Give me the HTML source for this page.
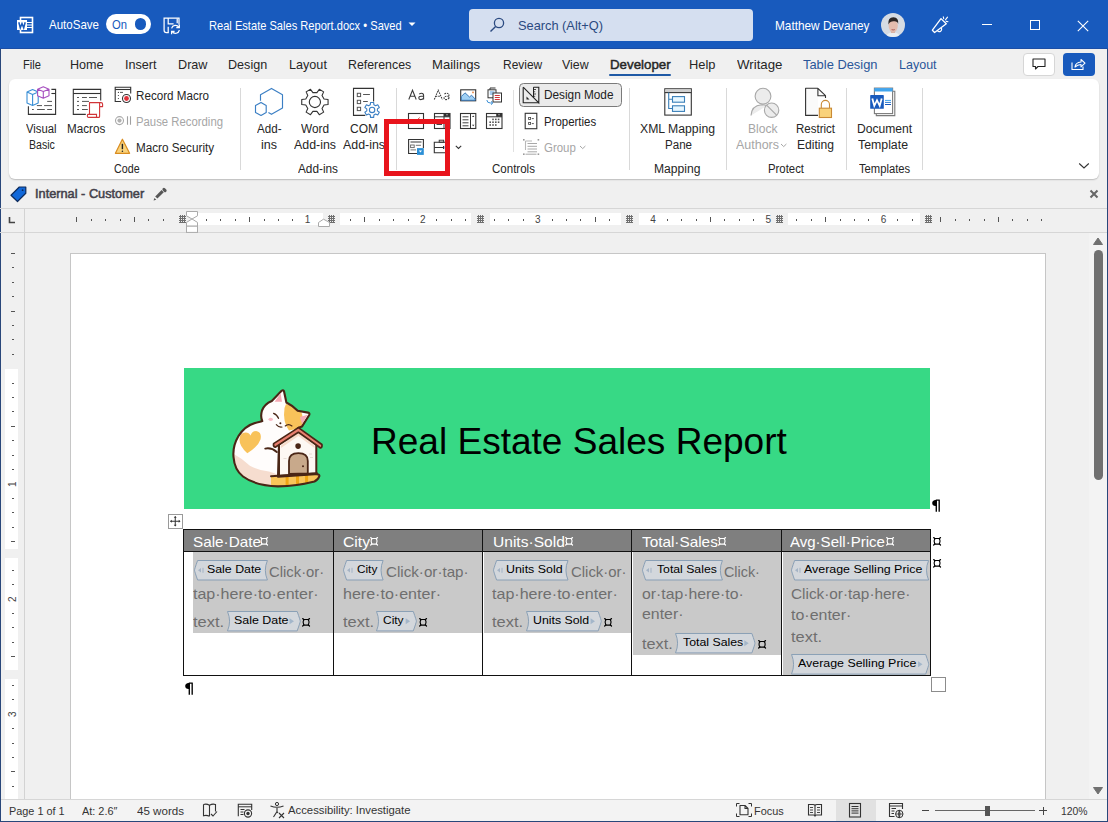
<!DOCTYPE html>
<html><head><meta charset="utf-8"><style>
html,body{margin:0;padding:0;width:1108px;height:822px;overflow:hidden;background:#f0f0f0;font-family:'Liberation Sans', sans-serif;}
.t{position:absolute;white-space:pre;line-height:1;transform-origin:0 0;}
.r{position:absolute;box-sizing:border-box;}
.s{position:absolute;overflow:visible;}
</style></head><body>
<div class="r" style="left:0px;top:0px;width:1108px;height:822px;background:#f0f0f0"></div>
<div class="r" style="left:0px;top:0px;width:1108px;height:49px;background:#185abd"></div>
<div class="r" style="left:0px;top:48px;width:1108px;height:1px;background:#1b4ea6"></div>
<div class="r" style="left:0px;top:49px;width:1px;height:773px;background:#29477a"></div>
<div class="r" style="left:1107px;top:49px;width:1px;height:773px;background:#29477a"></div>
<div class="r" style="left:0px;top:821px;width:1108px;height:1px;background:#29477a"></div>
<svg class="s" style="left:16px;top:16px;" width="18" height="18" viewBox="0 0 18 18">
<rect x="4.5" y="1.5" width="12" height="15" fill="none" stroke="#fff" stroke-width="1.6"></rect>
<rect x="1" y="4" width="10" height="10" fill="#fff"></rect>
<path d="M2.8 6.2 L4.3 11.8 L6 7.5 L7.7 11.8 L9.2 6.2" fill="none" stroke="#185abd" stroke-width="1.5"></path>
<path d="M11 6.5 H16 M11 9 H16 M11 11.5 H16" stroke="#fff" stroke-width="1.2"></path>
</svg>
<span class="t" style="left: 49px; top: 18.96px; font-size: 12.4px; color: rgb(255, 255, 255); font-weight: normal; transform: scaleX(0.9305); transform-origin: 0px 0px;">AutoSave</span>
<div class="r" style="left:106px;top:14px;width:45px;height:20px;background:#fff;border-radius:10px"></div>
<span class="t" style="left: 112.3px; top: 18.96px; font-size: 12.4px; color: rgb(24, 90, 189); font-weight: normal; transform: scaleX(0.9074); transform-origin: 0px 0px;">On</span>
<div class="r" style="left:134.5px;top:18.2px;width:11.6px;height:11.6px;background:#185abd;border-radius:50%"></div>
<svg class="s" style="left:162.7px;top:16.6px;" width="19" height="18" viewBox="0 0 19 18">
<g fill="none" stroke="#fff" stroke-width="1.25">
<path d="M16 7.6 V1 H1.1 V13.2 Q1.1 15.5 3.4 15.5 H5.8"></path>
<path d="M5.2 1 V6.8 H10.6"></path>
<path d="M14.2 1.5 V6.3"></path>
<path d="M5.2 9.8 V15.5"></path>
<path d="M8.6 11.3 A4 4 0 0 1 15.8 10.2"></path>
<path d="M16.4 13.2 A4 4 0 0 1 9.2 14.6"></path>
<path d="M16.3 7.6 V10.6 H13.3"></path>
<path d="M8.6 17.3 V14.3 H11.6"></path>
</g></svg>
<span class="t" style="left: 208.8px; top: 20.46px; font-size: 12.4px; color: rgb(255, 255, 255); font-weight: normal; transform: scaleX(0.8959); transform-origin: 0px 0px;">Real Estate Sales Report.docx • Saved</span>
<svg class="s" style="left:408px;top:22px;" width="8" height="5" viewBox="0 0 8 5"><path d="M0.5 0.5 L4 4 L7.5 0.5 Z" fill="#fff"></path></svg>
<div class="r" style="left:469px;top:9px;width:284px;height:32px;background:#d5dff0;border-radius:4px"></div>
<svg class="s" style="left:489px;top:17px;" width="16" height="16" viewBox="0 0 16 16"><circle cx="10" cy="6" r="4.6" fill="none" stroke="#2b4a80" stroke-width="1.3"></circle><path d="M6.6 9.4 L1.5 14.5" stroke="#2b4a80" stroke-width="1.4"></path></svg>
<span class="t" style="left: 518px; top: 19.96px; font-size: 12.4px; color: rgb(43, 74, 128); font-weight: normal; transform: scaleX(1.0328); transform-origin: 0px 0px;">Search (Alt+Q)</span>
<span class="t" style="left: 775px; top: 19.96px; font-size: 12.4px; color: rgb(255, 255, 255); font-weight: normal; transform: scaleX(0.9527); transform-origin: 0px 0px;">Matthew Devaney</span>
<svg class="s" style="left:881px;top:12.7px;" width="24" height="24" viewBox="0 0 24 24">
<defs><clipPath id="av"><circle cx="12" cy="12" r="12"></circle></clipPath></defs>
<circle cx="12" cy="12" r="12" fill="#d5dbe3"></circle>
<g clip-path="url(#av)">
<path d="M4 25 Q6 19.5 12 19 Q18 19.5 20 25 Z" fill="#e9eef2"></path>
<path d="M9.5 17 L10 20 L14 20 L14.5 17 Z" fill="#d9b3a5"></path>
<ellipse cx="12.2" cy="12.8" rx="4.6" ry="6.2" fill="#e3bcae"></ellipse>
<path d="M7.3 11.5 Q6.8 4.2 12.5 4.3 Q17.8 4.4 17.2 11 Q16.5 8 13 8.2 Q9.2 8 7.3 11.5 Z" fill="#2b2625"></path>
<path d="M10.6 16.6 Q12.2 17.3 13.8 16.6" stroke="#a5524d" stroke-width="0.9" fill="none"></path>
</g></svg>
<svg class="s" style="left:931px;top:16px;" width="18" height="18" viewBox="0 0 18 18">
<path d="M1.4 14.2 L10 2.6 L15.3 7.8 L3.6 16.5 Z" fill="none" stroke="#fff" stroke-width="1.3" stroke-linejoin="round"></path>
<path d="M6.4 14.6 A2.2 2.2 0 0 0 10.2 11.9" fill="none" stroke="#fff" stroke-width="1.2"></path>
<path d="M12.3 0.9 L12.7 2.7 M16.5 1.2 L14.4 3.9 M15.2 5.4 L17 5.7" stroke="#fff" stroke-width="1.1" stroke-linecap="round"></path>
</svg>
<div class="r" style="left:982px;top:24px;width:10px;height:1px;background:#fff"></div>
<div class="r" style="left:1030px;top:20px;width:10px;height:10px;border:1px solid #fff"></div>
<svg class="s" style="left:1077px;top:19.5px;" width="12" height="12" viewBox="0 0 12 12"><path d="M0.8 0.8 L11.2 11.2 M11.2 0.8 L0.8 11.2" stroke="#fff" stroke-width="1.1"></path></svg>
<span class="t" style="left: 23.3px; top: 59.03px; font-size: 12.9px; color: rgb(38, 38, 38); font-weight: normal; transform: scaleX(0.8614); transform-origin: 0px 0px;">File</span>
<span class="t" style="left: 69.5px; top: 59.03px; font-size: 12.9px; color: rgb(38, 38, 38); font-weight: normal; transform: scaleX(0.977); transform-origin: 0px 0px;">Home</span>
<span class="t" style="left: 125.1px; top: 59.03px; font-size: 12.9px; color: rgb(38, 38, 38); font-weight: normal; transform: scaleX(0.9798); transform-origin: 0px 0px;">Insert</span>
<span class="t" style="left: 178.2px; top: 59.03px; font-size: 12.9px; color: rgb(38, 38, 38); font-weight: normal; transform: scaleX(0.9803); transform-origin: 0px 0px;">Draw</span>
<span class="t" style="left: 228.2px; top: 59.03px; font-size: 12.9px; color: rgb(38, 38, 38); font-weight: normal; transform: scaleX(0.9766); transform-origin: 0px 0px;">Design</span>
<span class="t" style="left: 289px; top: 59.03px; font-size: 12.9px; color: rgb(38, 38, 38); font-weight: normal; transform: scaleX(0.9789); transform-origin: 0px 0px;">Layout</span>
<span class="t" style="left: 348.3px; top: 59.03px; font-size: 12.9px; color: rgb(38, 38, 38); font-weight: normal; transform: scaleX(0.9587); transform-origin: 0px 0px;">References</span>
<span class="t" style="left: 432.2px; top: 59.03px; font-size: 12.9px; color: rgb(38, 38, 38); font-weight: normal; transform: scaleX(1.017); transform-origin: 0px 0px;">Mailings</span>
<span class="t" style="left: 502.5px; top: 59.03px; font-size: 12.9px; color: rgb(38, 38, 38); font-weight: normal; transform: scaleX(0.9271); transform-origin: 0px 0px;">Review</span>
<span class="t" style="left: 562.2px; top: 59.03px; font-size: 12.9px; color: rgb(38, 38, 38); font-weight: normal; transform: scaleX(0.9596); transform-origin: 0px 0px;">View</span>
<span class="t" style="left: 689.1px; top: 59.03px; font-size: 12.9px; color: rgb(38, 38, 38); font-weight: normal; transform: scaleX(0.9994); transform-origin: 0px 0px;">Help</span>
<span class="t" style="left: 737.1px; top: 59.03px; font-size: 12.9px; color: rgb(38, 38, 38); font-weight: normal; transform: scaleX(1.0297); transform-origin: 0px 0px;">Writage</span>
<span class="t" style="left: 609.5px; top: 59.03px; font-size: 12.9px; color: rgb(38, 38, 38); font-weight: normal; -webkit-text-stroke: 0.45px rgb(38, 38, 38); transform: scaleX(1.0312); transform-origin: 0px 0px;">Developer</span>
<div class="r" style="left:609px;top:74px;width:62px;height:2px;background:#1f5aa6;border-radius:1px"></div>
<span class="t" style="left: 803.3px; top: 59.03px; font-size: 12.9px; color: rgb(42, 86, 153); font-weight: normal; transform: scaleX(0.9996); transform-origin: 0px 0px;">Table Design</span>
<span class="t" style="left: 899.2px; top: 59.03px; font-size: 12.9px; color: rgb(42, 86, 153); font-weight: normal; transform: scaleX(0.9711); transform-origin: 0px 0px;">Layout</span>
<div class="r" style="left:1023px;top:52.5px;width:32px;height:23px;background:#fff;border:1px solid #d6d6d6;border-radius:4px"></div>
<svg class="s" style="left:1032px;top:58px;" width="14" height="12" viewBox="0 0 14 12"><path d="M1 1 H13 V8.5 H6 L3.5 11 V8.5 H1 Z" fill="none" stroke="#222" stroke-width="1.1" stroke-linejoin="round"></path></svg>
<div class="r" style="left:1062.5px;top:52.5px;width:32px;height:23px;background:#185abd;border-radius:4px"></div>
<svg class="s" style="left:1071px;top:57px;" width="15" height="14" viewBox="0 0 15 14"><path d="M1 5.5 V12.5 H12 V9.5" fill="none" stroke="#fff" stroke-width="1.1"></path>
<path d="M4 10 Q4.5 5.5 10 5 V2.5 L14 6.2 L10 9.8 V7.5 Q6.5 7.6 4 10 Z" fill="none" stroke="#fff" stroke-width="1.1" stroke-linejoin="round"></path></svg>
<div class="r" style="left:9px;top:79px;width:1090px;height:100px;background:#fff;border-radius:6px;box-shadow:0 1px 1.5px rgba(0,0,0,0.22)"></div>
<svg class="s" style="left:22px;top:83px;" width="40" height="36" viewBox="0 0 40 36">
<path d="M29.4 6.4 H33.6 V31.4 H6.4 V23.2" fill="none" stroke="#333" stroke-width="1.1"></path>
<path d="M29.4 10.5 H33.6" stroke="#333" stroke-width="1.1"></path>
<path d="M25.2 18.4 H30 M14.9 22.6 H20 M22.1 22.6 H30 M10 26.5 H11.8 M15.1 26.5 H22.8 M25.2 26.5 H30" stroke="#555" stroke-width="1"></path>
<path d="M5 9 L10.6 6.6 L16.2 9 V20 L10.6 22.4 L5 20 Z M5 9 L10.6 11.4 L16.2 9 M10.6 11.4 V22.4" fill="#fff" stroke="#3a8fd6" stroke-width="1.1" stroke-linejoin="round"></path>
<path d="M15.6 6.2 L21.3 3.8 L27 6.2 V12.8 L21.3 15.2 L15.6 12.8 Z M15.6 6.2 L21.3 8.6 L27 6.2 M21.3 8.6 V15.2" fill="#fff" stroke="#a64fbf" stroke-width="1.1" stroke-linejoin="round"></path>
</svg>
<svg class="s" style="left:68px;top:83px;" width="40" height="36" viewBox="0 0 40 36">
<path d="M17.8 31.4 H5.3 V6.4 H32.7 V17.5" fill="none" stroke="#333" stroke-width="1.1"></path>
<path d="M5.3 10.5 H32.7" stroke="#333" stroke-width="1.1"></path>
<path d="M9 14.5 H11 M14 14.5 H18.9 M21 14.5 H29 M9 18.4 H11 M14 18.4 H21 M9 22.6 H11 M14 22.6 H18.9 M9 26.5 H11 M14 26.5 H19.8" stroke="#555" stroke-width="1"></path>
<path d="M21.5 19.6 H33 Q34.6 19.6 34.6 21.3 V23.6 H31.6 V33.4 Q31.6 34.4 30.6 34.4 H20.6 Q19.4 34.4 19.4 33.2 V32.3 Q19.4 31.4 20.4 31.4 H21.5 Z" fill="#fff" stroke="#d13438" stroke-width="1.1" stroke-linejoin="round"></path>
<path d="M21.5 31.4 H28.5 V34.4 M31.6 19.6 V23.6" fill="none" stroke="#d13438" stroke-width="1.1"></path>
</svg>
<span class="t" style="left: 26.1px; top: 122.95px; font-size: 12.3px; color: rgb(38, 38, 38); font-weight: normal; transform: scaleX(0.9164); transform-origin: 0px 0px;">Visual</span>
<span class="t" style="left: 28.6px; top: 138.84px; font-size: 12.3px; color: rgb(38, 38, 38); font-weight: normal; transform: scaleX(0.8611); transform-origin: 0px 0px;">Basic</span>
<span class="t" style="left: 67.4px; top: 122.95px; font-size: 12.3px; color: rgb(38, 38, 38); font-weight: normal; transform: scaleX(0.9497); transform-origin: 0px 0px;">Macros</span>
<svg class="s" style="left:112px;top:84px;" width="22" height="22" viewBox="0 0 22 22">
<path d="M9.1 17.5 H3.2 V3.2 H18.7 V9.6" fill="none" stroke="#333" stroke-width="1.1"></path>
<path d="M3.2 5.5 H18.7" stroke="#333" stroke-width="1.1"></path>
<circle cx="6.4" cy="8.4" r="0.6" fill="#444"></circle><circle cx="6.4" cy="11.5" r="0.6" fill="#444"></circle><circle cx="6.4" cy="14.5" r="0.6" fill="#444"></circle>
<path d="M8 8.4 H11" stroke="#444" stroke-width="0.9"></path>
<circle cx="14.5" cy="14.5" r="4" fill="#fff" stroke="#333" stroke-width="1.1"></circle>
<circle cx="14.5" cy="14.5" r="2.4" fill="#e0303a"></circle>
</svg>
<span class="t" style="left: 135.6px; top: 89.95px; font-size: 12.3px; color: rgb(38, 38, 38); font-weight: normal; transform: scaleX(0.9465); transform-origin: 0px 0px;">Record Macro</span>
<svg class="s" style="left:112px;top:112px;" width="22" height="16" viewBox="0 0 22 16">
<circle cx="7.5" cy="8.6" r="4" fill="none" stroke="#a8a8a8" stroke-width="1.1"></circle>
<circle cx="7.5" cy="8.6" r="2.1" fill="#b0b0b0"></circle>
<path d="M15.5 4.2 V12.8 M18.5 4.2 V12.8" stroke="#a0a0a0" stroke-width="1.1"></path>
</svg>
<span class="t" style="left: 135.6px; top: 115.55px; font-size: 12.3px; color: rgb(166, 166, 166); font-weight: normal; transform: scaleX(0.9222); transform-origin: 0px 0px;">Pause Recording</span>
<svg class="s" style="left:112px;top:136px;" width="22" height="20" viewBox="0 0 22 20">
<path d="M10.4 3.2 L17.6 17.3 H3.4 Z" fill="#f9d27a" stroke="#d98c1f" stroke-width="1.2" stroke-linejoin="round"></path>
<path d="M10.4 7.8 V13.2" stroke="#222" stroke-width="1.4"></path>
<circle cx="10.4" cy="15.3" r="0.8" fill="#222"></circle>
</svg>
<span class="t" style="left: 135.6px; top: 141.54px; font-size: 12.3px; color: rgb(38, 38, 38); font-weight: normal; transform: scaleX(0.9523); transform-origin: 0px 0px;">Macro Security</span>
<span class="t" style="left: 113.6px; top: 162.84px; font-size: 12.3px; color: rgb(38, 38, 38); font-weight: normal; transform: scaleX(0.8706); transform-origin: 0px 0px;">Code</span>
<div class="r" style="left:239.5px;top:88px;width:1px;height:82px;background:#d9d9d9"></div>
<svg class="s" style="left:250px;top:84px;" width="40" height="36" viewBox="0 0 40 36">
<path d="M10.5 16.7 V10.7 L21.5 4.4 L32.5 10.7 V24.1 L21.5 30.3 L18.4 28.5" fill="none" stroke="#3b7fc4" stroke-width="1.15" stroke-linejoin="round"></path>
<path d="M11 18.4 L16.2 21.5 V28.5 L11 31.4 L5.5 28.5 V21.5 Z" fill="none" stroke="#3b7fc4" stroke-width="1.15" stroke-linejoin="round"></path>
</svg>
<svg class="s" style="left:296px;top:84px;" width="40" height="36" viewBox="0 0 40 36">
<path d="M28.03 15.03 L32.06 15.49 L32.06 20.51 L28.03 20.97 L26.03 24.42 L27.66 28.14 L23.31 30.65 L20.90 27.39 L16.90 27.39 L14.49 30.65 L10.14 28.14 L11.77 24.42 L9.77 20.97 L5.74 20.51 L5.74 15.49 L9.77 15.03 L11.77 11.58 L10.14 7.86 L14.49 5.35 L16.90 8.61 L20.90 8.61 L23.31 5.35 L27.66 7.86 L26.03 11.58 Z" fill="none" stroke="#333" stroke-width="1.1" stroke-linejoin="round"></path>
<circle cx="18.9" cy="18" r="5.6" fill="none" stroke="#333" stroke-width="1.1"></circle>
</svg>
<svg class="s" style="left:346px;top:84px;" width="40" height="36" viewBox="0 0 40 36">
<path d="M27.6 17.5 V4.4 H7.5 V31.4 H19.3" fill="none" stroke="#333" stroke-width="1.1"></path>
<rect x="11.3" y="9.3" width="3.3" height="3.3" fill="none" stroke="#555" stroke-width="1"></rect>
<rect x="11.3" y="16.3" width="3.3" height="3.3" fill="none" stroke="#555" stroke-width="1"></rect>
<rect x="11.3" y="23.3" width="3.3" height="3.3" fill="none" stroke="#555" stroke-width="1"></rect>
<path d="M17.1 10.5 H23.9 M17.1 17.5 H21.8" stroke="#555" stroke-width="1"></path>
<path d="M27.88 31.00 L27.68 33.33 L24.52 33.33 L24.32 31.00 L22.57 29.99 L20.45 30.99 L18.87 28.25 L20.80 26.91 L20.80 24.89 L18.87 23.55 L20.45 20.81 L22.57 21.81 L24.32 20.80 L24.52 18.47 L27.68 18.47 L27.88 20.80 L29.63 21.81 L31.75 20.81 L33.33 23.55 L31.40 24.89 L31.40 26.91 L33.33 28.25 L31.75 30.99 L29.63 29.99 Z" fill="#fff" stroke="#3b7fc4" stroke-width="1.1" stroke-linejoin="round"></path>
<circle cx="26.1" cy="25.9" r="2.7" fill="none" stroke="#3b7fc4" stroke-width="1.1"></circle>
</svg>
<span class="t" style="left: 256.5px; top: 123.05px; font-size: 12.3px; color: rgb(38, 38, 38); font-weight: normal; transform: scaleX(0.9429); transform-origin: 0px 0px;">Add-</span>
<span class="t" style="left: 260.5px; top: 138.84px; font-size: 12.3px; color: rgb(38, 38, 38); font-weight: normal; transform: scaleX(1.0169); transform-origin: 0px 0px;">ins</span>
<span class="t" style="left: 301px; top: 123.05px; font-size: 12.3px; color: rgb(38, 38, 38); font-weight: normal; transform: scaleX(0.9598); transform-origin: 0px 0px;">Word</span>
<span class="t" style="left: 294px; top: 138.84px; font-size: 12.3px; color: rgb(38, 38, 38); font-weight: normal; transform: scaleX(1.0071); transform-origin: 0px 0px;">Add-ins</span>
<span class="t" style="left: 350px; top: 123.05px; font-size: 12.3px; color: rgb(38, 38, 38); font-weight: normal; transform: scaleX(0.9755); transform-origin: 0px 0px;">COM</span>
<span class="t" style="left: 343px; top: 138.84px; font-size: 12.3px; color: rgb(38, 38, 38); font-weight: normal; transform: scaleX(1.0071); transform-origin: 0px 0px;">Add-ins</span>
<span class="t" style="left: 298px; top: 162.84px; font-size: 12.3px; color: rgb(38, 38, 38); font-weight: normal; transform: scaleX(0.9592); transform-origin: 0px 0px;">Add-ins</span>
<div class="r" style="left:395.5px;top:88px;width:1px;height:82px;background:#d9d9d9"></div>
<svg class="s" style="left:404px;top:86px;" width="50" height="18" viewBox="0 0 50 18">
<g fill="none" stroke="#3a3a3a" stroke-width="1.05">
<path d="M4.8 13.5 L8.5 4.2 L12.2 13.5 M6.2 10.3 H10.8"></path>
<path d="M15.2 8.1 Q16.3 7.2 17.5 7.2 Q19.6 7.2 19.6 9.4 V13.5 M19.6 10.3 H17.1 Q14.8 10.3 14.8 12 Q14.8 13.6 16.6 13.6 Q18.7 13.6 19.6 12"></path>
</g>
<g fill="none" stroke="#3a3a3a" stroke-width="1.05" stroke-dasharray="1.6 0.9">
<path d="M30.3 13.5 L34.2 4.2 L38.4 13.5 M31.7 10.3 H36.9"></path>
<path d="M40.5 8.1 Q41.6 7.2 42.8 7.2 Q44.9 7.2 44.9 9.4 V13.5 M44.9 10.3 H42.4 Q40.1 10.3 40.1 12 Q40.1 13.6 41.9 13.6 Q44 13.6 44.9 12"></path>
</g></svg>
<svg class="s" style="left:458px;top:86px;" width="20" height="17" viewBox="0 0 20 17">
<rect x="2.7" y="3.8" width="15" height="11" fill="#fff" stroke="#333" stroke-width="1.1"></rect>
<path d="M3.3 10.5 L7 6.8 L11.5 11 L13.5 9.2 L17.2 13 V14.3 H3.3 Z" fill="#9fd0f5" stroke="#2f6fb1" stroke-width="0.9" stroke-linejoin="round"></path>
<rect x="14.2" y="5.6" width="1.6" height="1.6" fill="#e8803a"></rect>
</svg>
<svg class="s" style="left:485px;top:86px;" width="19" height="19" viewBox="0 0 19 19">
<path d="M5 10.5 V2 H10.5" fill="none" stroke="#333" stroke-width="1"></path>
<rect x="3" y="3.8" width="8" height="8" fill="#fff" stroke="#333" stroke-width="1"></rect>
<path d="M4.8 6 H9.5 M4.8 8 H9.5" stroke="#3a8fd6" stroke-width="0.9"></path>
<rect x="8" y="7" width="8.5" height="9" fill="#fff" stroke="#333" stroke-width="1"></rect>
<path d="M9.8 9.5 H14.8 M9.8 11.5 H14.8 M9.8 13.5 H14.8" stroke="#d13438" stroke-width="1"></path>
<path d="M1.8 14 Q2 17 5.5 17 H7.5 M6 15.3 L7.8 17 L6 18.7" fill="none" stroke="#3a8fd6" stroke-width="1"></path>
</svg>
<svg class="s" style="left:406px;top:111px;" width="20" height="19" viewBox="0 0 20 19">
<rect x="2.5" y="2.5" width="15" height="15" fill="#fff" stroke="#333" stroke-width="1.1"></rect>
<path d="M6.5 10 L8.8 12.5 L13.5 6.5" fill="none" stroke="#c9463c" stroke-width="1"></path>
</svg>
<svg class="s" style="left:432px;top:111px;" width="20" height="19" viewBox="0 0 20 19">
<rect x="2.5" y="2.5" width="15.5" height="15" fill="#fff" stroke="#333" stroke-width="1.1"></rect>
<rect x="12" y="2.5" width="6" height="3.2" fill="#333"></rect>
<path d="M2.5 5.8 H18 M12 2.5 V17.5" stroke="#333" stroke-width="1"></path>
<path d="M4.5 9.5 H10 M4.5 13.5 H10" stroke="#444" stroke-width="1"></path>
<path d="M14 3.5 L15 4.6 L16 3.5 Z" fill="#fff"></path>
</svg>
<svg class="s" style="left:458px;top:111px;" width="20" height="19" viewBox="0 0 20 19">
<rect x="2.5" y="2.5" width="15.3" height="15" fill="#fff" stroke="#333" stroke-width="1.1"></rect>
<path d="M12.5 2.5 V17.5" stroke="#333" stroke-width="1"></path>
<path d="M4.5 5.8 H10.5 M4.5 8.8 H10.5 M4.5 11.8 H10.5 M4.5 14.8 H10.5" stroke="#444" stroke-width="1"></path>
<path d="M14 6 L15.2 4.6 L16.4 6 Z M14 13.8 L15.2 15.2 L16.4 13.8 Z" fill="#333"></path>
</svg>
<svg class="s" style="left:484px;top:111px;" width="20" height="19" viewBox="0 0 20 19">
<rect x="2.5" y="2.5" width="15.5" height="15" fill="#fff" stroke="#333" stroke-width="1.1"></rect>
<rect x="12.2" y="2.5" width="5.8" height="3.2" fill="#333"></rect>
<path d="M2.5 5.8 H18" stroke="#333" stroke-width="1"></path>
<path d="M14 3.5 L15 4.6 L16 3.5 Z" fill="#fff"></path>
<g fill="#555"><rect x="8.2" y="7.6" width="1.6" height="1.6"></rect><rect x="11" y="7.6" width="1.6" height="1.6"></rect><rect x="13.8" y="7.6" width="1.6" height="1.6"></rect>
<rect x="5.4" y="10.4" width="1.6" height="1.6"></rect><rect x="8.2" y="10.4" width="1.6" height="1.6"></rect><rect x="11" y="10.4" width="1.6" height="1.6"></rect><rect x="13.8" y="10.4" width="1.6" height="1.6"></rect>
<rect x="5.4" y="13.2" width="1.6" height="1.6"></rect><rect x="8.2" y="13.2" width="1.6" height="1.6"></rect><rect x="11" y="13.2" width="1.6" height="1.6"></rect></g>
</svg>
<svg class="s" style="left:406px;top:137px;" width="20" height="20" viewBox="0 0 20 20">
<path d="M11.5 16.5 H2.6 V2.5 H17.4 V11" fill="none" stroke="#333" stroke-width="1.1"></path>
<path d="M4.5 5 H15.5" stroke="#666" stroke-width="1.3"></path>
<rect x="4.6" y="8" width="3.6" height="2.6" fill="none" stroke="#666" stroke-width="0.9"></rect>
<path d="M9.8 8.3 H15 M4.5 12.9 H10" stroke="#666" stroke-width="0.9"></path>
<rect x="11" y="11.1" width="6.8" height="6.8" fill="#2b8fd6"></rect>
<path d="M12.8 13.5 H16 L14.4 15.5 Z" fill="#fff"></path>
</svg>
<svg class="s" style="left:432px;top:137px;" width="20" height="20" viewBox="0 0 20 20">
<path d="M13.5 15.7 H2.3 V5.2 H13" fill="none" stroke="#333" stroke-width="1.1"></path>
<rect x="7.2" y="3.2" width="4.5" height="2" fill="none" stroke="#333" stroke-width="0.9"></rect>
<path d="M2.3 10.5 H11" stroke="#333" stroke-width="1"></path>
<path d="M15 7.5 A3.2 3.2 0 0 0 15 13.5" fill="none" stroke="#3a6fc0" stroke-width="1.1"></path>
<path d="M11.5 9 V12" stroke="#333" stroke-width="1"></path>
</svg>
<svg class="s" style="left:454px;top:143px;" width="9" height="7" viewBox="0 0 9 7"><path d="M1.8 2.8 L4.5 5.4 L7.2 2.8" fill="none" stroke="#333" stroke-width="1.1"></path></svg>
<div class="r" style="left:512.5px;top:90px;width:1px;height:62px;background:#e0e0e0"></div>
<div class="r" style="left:519px;top:83px;width:103px;height:24px;background:#ebebeb;border:1px solid #7a7a7a;border-radius:4.5px"></div>
<svg class="s" style="left:521px;top:85px;" width="20" height="20" viewBox="0 0 20 20">
<path d="M2.2 2.2 L17.8 17.8 V2.2 H12.5" fill="none" stroke="#222" stroke-width="1.1"></path>
<path d="M2.2 2.2 V17.8 H17.8" fill="none" stroke="#222" stroke-width="1.1"></path>
<path d="M12.5 2.2 V12.5" stroke="#222" stroke-width="1"></path>
<path d="M12.5 4.5 H15 M12.5 6.8 H14.2 M12.5 9 H15 M12.5 11.3 H14.2" stroke="#222" stroke-width="0.8"></path>
<path d="M5.5 14.5 L5.5 11.5 L8.5 14.5 Z" fill="#222"></path>
</svg>
<span class="t" style="left: 543.8px; top: 89.45px; font-size: 12.3px; color: rgb(34, 34, 34); font-weight: normal; transform: scaleX(0.959); transform-origin: 0px 0px;">Design Mode</span>
<svg class="s" style="left:523px;top:111px;" width="16" height="20" viewBox="0 0 16 20">
<rect x="2.2" y="2.3" width="11.6" height="15.4" fill="#fff" stroke="#333" stroke-width="1.1"></rect>
<rect x="5.6" y="6.5" width="2" height="2" fill="none" stroke="#444" stroke-width="0.8"></rect>
<rect x="5.6" y="11.5" width="2" height="2" fill="none" stroke="#444" stroke-width="0.8"></rect>
<path d="M8.8 7.6 H10.8 M8.8 12.6 H10.8" stroke="#444" stroke-width="0.9"></path>
</svg>
<span class="t" style="left: 543.8px; top: 115.75px; font-size: 12.3px; color: rgb(34, 34, 34); font-weight: normal; transform: scaleX(0.9296); transform-origin: 0px 0px;">Properties</span>
<svg class="s" style="left:521px;top:137px;" width="20" height="20" viewBox="0 0 20 20">
<g fill="#9a9a9a"><rect x="2" y="2" width="1.6" height="1.6"></rect><rect x="16.6" y="2" width="1.6" height="1.6"></rect><rect x="2" y="16.4" width="1.6" height="1.6"></rect><rect x="16.6" y="16.4" width="1.6" height="1.6"></rect></g>
<path d="M4.5 4 V13 M4.5 4 H11" stroke="#b8b8b8" stroke-width="1.1" fill="none"></path>
<path d="M6.5 6.5 H16 M6.5 9.3 H16 M6.5 12 H16 M6.5 14.8 H16" stroke="#a8a8a8" stroke-width="1"></path>
<path d="M4.5 17.2 H15.5" stroke="#a8a8a8" stroke-width="1"></path>
</svg>
<span class="t" style="left: 543.8px; top: 141.54px; font-size: 12.3px; color: rgb(166, 166, 166); font-weight: normal; transform: scaleX(0.9302); transform-origin: 0px 0px;">Group</span>
<svg class="s" style="left:579px;top:145px;" width="8" height="5" viewBox="0 0 8 5"><path d="M1 1 L3.7 3.6 L6.4 1" fill="none" stroke="#a6a6a6" stroke-width="1"></path></svg>
<span class="t" style="left: 491.6px; top: 162.84px; font-size: 12.3px; color: rgb(38, 38, 38); font-weight: normal; transform: scaleX(0.9367); transform-origin: 0px 0px;">Controls</span>
<div class="r" style="left:629px;top:88px;width:1px;height:82px;background:#d9d9d9"></div>
<svg class="s" style="left:656px;top:82px;" width="44" height="40" viewBox="0 0 44 40">
<rect x="8.8" y="6.8" width="26.5" height="26.3" fill="#fff" stroke="#333" stroke-width="1.1"></rect>
<rect x="9.3" y="7.3" width="25.5" height="3.2" fill="#cfcfcf"></rect>
<path d="M8.8 10.6 H35.3" stroke="#333" stroke-width="1.1"></path>
<path d="M12.7 10.6 V26.5 H16.3 M12.7 17.3 H16.3" fill="none" stroke="#3a7fb8" stroke-width="1.1"></path>
<rect x="16.5" y="14.6" width="12" height="5.6" fill="#e8f7ff" stroke="#3a7fb8" stroke-width="1.1"></rect>
<rect x="16.5" y="23.8" width="12" height="5.6" fill="#e8f7ff" stroke="#3a7fb8" stroke-width="1.1"></rect>
</svg>
<span class="t" style="left: 639.5px; top: 123.05px; font-size: 12.3px; color: rgb(38, 38, 38); font-weight: normal; transform: scaleX(0.9944); transform-origin: 0px 0px;">XML Mapping</span>
<span class="t" style="left: 664.5px; top: 138.84px; font-size: 12.3px; color: rgb(38, 38, 38); font-weight: normal; transform: scaleX(0.9402); transform-origin: 0px 0px;">Pane</span>
<span class="t" style="left: 654px; top: 162.84px; font-size: 12.3px; color: rgb(38, 38, 38); font-weight: normal; transform: scaleX(0.9858); transform-origin: 0px 0px;">Mapping</span>
<div class="r" style="left:725.5px;top:88px;width:1px;height:82px;background:#d9d9d9"></div>
<svg class="s" style="left:745px;top:82px;" width="95" height="40" viewBox="0 0 95 40">
<circle cx="18" cy="14.2" r="7.9" fill="#ececec" stroke="#a8a8a8" stroke-width="1.1"></circle>
<path d="M6 33.5 Q6.5 23.5 16.5 22.7 Q20 22.7 22 23.8" fill="#ececec" stroke="#a8a8a8" stroke-width="1.1"></path>
<path d="M6 33.5 H20" stroke="none"></path>
<circle cx="26.6" cy="28.2" r="7.2" fill="#ececec" stroke="#a8a8a8" stroke-width="1.1"></circle>
<path d="M21.6 23.2 L31.6 33.2" stroke="#a8a8a8" stroke-width="1.1"></path>
<path d="M72.9 6.3 H60.6 V33.4 H73 M80.5 16 V13.7 L72.9 6.3 V13.7 H80.5" fill="#fafafa" stroke="#333" stroke-width="1.1" stroke-linejoin="round"></path>
<path d="M76.3 26.2 V22.5 A4.1 4.1 0 0 1 84.5 22.5 V26.2" fill="none" stroke="#c98a36" stroke-width="1.1"></path>
<rect x="74.3" y="26.2" width="12.2" height="9.3" fill="#f9d27a" stroke="#c98a36" stroke-width="1.1"></rect>
</svg>
<span class="t" style="left: 748px; top: 123.05px; font-size: 12.3px; color: rgb(166, 166, 166); font-weight: normal; transform: scaleX(0.9808); transform-origin: 0px 0px;">Block</span>
<span class="t" style="left: 736px; top: 138.84px; font-size: 12.3px; color: rgb(166, 166, 166); font-weight: normal; transform: scaleX(1.0144); transform-origin: 0px 0px;">Authors</span>
<svg class="s" style="left:780px;top:143px;" width="8" height="5" viewBox="0 0 8 5"><path d="M1 1 L3.7 3.6 L6.4 1" fill="none" stroke="#a6a6a6" stroke-width="1"></path></svg>
<span class="t" style="left: 796px; top: 123.05px; font-size: 12.3px; color: rgb(38, 38, 38); font-weight: normal; transform: scaleX(0.9355); transform-origin: 0px 0px;">Restrict</span>
<span class="t" style="left: 797px; top: 138.84px; font-size: 12.3px; color: rgb(38, 38, 38); font-weight: normal; transform: scaleX(0.9838); transform-origin: 0px 0px;">Editing</span>
<span class="t" style="left: 768px; top: 162.84px; font-size: 12.3px; color: rgb(38, 38, 38); font-weight: normal; transform: scaleX(0.9238); transform-origin: 0px 0px;">Protect</span>
<div class="r" style="left:846px;top:88px;width:1px;height:82px;background:#d9d9d9"></div>
<svg class="s" style="left:860px;top:82px;" width="44" height="40" viewBox="0 0 44 40">
<path d="M32.6 9.3 H34.8 V33.6 H16.3 V31.6" fill="none" stroke="#7a7a7a" stroke-width="1.1"></path>
<rect x="14.4" y="6.1" width="18.2" height="25.5" fill="#fff" stroke="#7a7a7a" stroke-width="1.1"></rect>
<rect x="14.4" y="6.1" width="18.2" height="3.4" fill="#41a5ee"></rect>
<rect x="10.2" y="13.1" width="13.6" height="13.7" rx="0.6" fill="#185abd"></rect>
<path d="M12.3 16.5 L14.3 23.8 L17 18.2 L19.7 23.8 L21.7 16.5" fill="none" stroke="#fff" stroke-width="1.8" stroke-linejoin="miter"></path>
<path d="M25 18.4 H31 " stroke="#41a5ee" stroke-width="1"></path><path d="M25 20.4 H31" stroke="#2b7cd3" stroke-width="1"></path><path d="M25 22.5 H31" stroke="#185abd" stroke-width="1"></path>
</svg>
<span class="t" style="left: 856.7px; top: 123.05px; font-size: 12.3px; color: rgb(38, 38, 38); font-weight: normal; transform: scaleX(0.9831); transform-origin: 0px 0px;">Document</span>
<span class="t" style="left: 858px; top: 138.84px; font-size: 12.3px; color: rgb(38, 38, 38); font-weight: normal; transform: scaleX(1.0019); transform-origin: 0px 0px;">Template</span>
<span class="t" style="left: 858.6px; top: 162.84px; font-size: 12.3px; color: rgb(38, 38, 38); font-weight: normal; transform: scaleX(0.9135); transform-origin: 0px 0px;">Templates</span>
<div class="r" style="left:922px;top:88px;width:1px;height:82px;background:#d9d9d9"></div>
<svg class="s" style="left:1078px;top:161.6px;" width="12" height="8" viewBox="0 0 12 8"><path d="M1.2 1.5 L6 6 L10.8 1.5" fill="none" stroke="#333" stroke-width="1.1"></path></svg>
<div class="r" style="left:384px;top:119px;width:66px;height:56.5px;border:5px solid #e8141c"></div>
<div class="r" style="left:0px;top:208px;width:1107px;height:1px;background:#d6d6d6"></div>
<svg class="s" style="left:9px;top:185px;" width="19" height="18" viewBox="0 0 19 18">
<path d="M2 10.2 L10.3 2 H16.8 V8.3 L8.5 16.5 Z" fill="#1168d9" stroke="#0d2b5c" stroke-width="1.2" stroke-linejoin="round"></path>
<circle cx="13.6" cy="5.2" r="0.9" fill="#0d2b5c"></circle>
</svg>
<span class="t" style="left: 35.4px; top: 187.94px; font-size: 12.3px; color: rgb(67, 65, 74); font-weight: normal; -webkit-text-stroke: 0.5px rgb(67, 65, 74); transform: scaleX(1.0375); transform-origin: 0px 0px;">Internal - Customer</span>
<svg class="s" style="left:148px;top:183px;" width="24" height="22" viewBox="0 0 24 22"><path d="M8.3 14.5 L14.7 8.1" stroke="#575757" stroke-width="3.1"></path><path d="M6.4 14.9 L8.3 16.8 L5.6 17.4 Z" fill="#575757"></path><path d="M15.9 6.4 L17.1 7.6" stroke="#575757" stroke-width="3" stroke-linecap="round"></path></svg>
<svg class="s" style="left:1089px;top:189px;" width="10" height="10" viewBox="0 0 10 10"><path d="M1.5 1.5 L8.5 8.5 M8.5 1.5 L1.5 8.5" stroke="#666" stroke-width="2"></path></svg>
<div class="r" style="left:0px;top:232px;width:1107px;height:1px;background:#d6d6d6"></div>
<div class="r" style="left:24px;top:209px;width:1px;height:591px;background:#d3d3d3"></div>
<svg class="s" style="left:8px;top:216px;" width="8" height="8" viewBox="0 0 8 8"><path d="M1.5 1 V6.5 H7" fill="none" stroke="#444" stroke-width="1.6"></path></svg>
<div class="r" style="left:193px;top:213px;width:130px;height:12px;background:#fff"></div>
<div class="r" style="left:340px;top:213px;width:131px;height:12px;background:#fff"></div>
<div class="r" style="left:490px;top:213px;width:131px;height:12px;background:#fff"></div>
<div class="r" style="left:639px;top:213px;width:131px;height:12px;background:#fff"></div>
<div class="r" style="left:788px;top:213px;width:132px;height:12px;background:#fff"></div>
<svg class="s" style="left:0;top:0" width="1108" height="240"><rect x="76" y="217" width="1" height="5" fill="#555"></rect><rect x="91" y="219" width="1" height="2" fill="#555"></rect><rect x="105" y="219" width="1" height="2" fill="#555"></rect><rect x="120" y="219" width="1" height="2" fill="#555"></rect><rect x="134" y="217" width="1" height="5" fill="#555"></rect><rect x="148" y="219" width="1" height="2" fill="#555"></rect><rect x="163" y="219" width="1" height="2" fill="#555"></rect><rect x="206" y="219" width="1" height="2" fill="#555"></rect><rect x="220" y="219" width="1" height="2" fill="#555"></rect><rect x="235" y="219" width="1" height="2" fill="#555"></rect><rect x="249" y="217" width="1" height="5" fill="#555"></rect><rect x="264" y="219" width="1" height="2" fill="#555"></rect><rect x="278" y="219" width="1" height="2" fill="#555"></rect><rect x="292" y="219" width="1" height="2" fill="#555"></rect><rect x="350" y="219" width="1" height="2" fill="#555"></rect><rect x="364" y="217" width="1" height="5" fill="#555"></rect><rect x="379" y="219" width="1" height="2" fill="#555"></rect><rect x="393" y="219" width="1" height="2" fill="#555"></rect><rect x="408" y="219" width="1" height="2" fill="#555"></rect><rect x="436" y="219" width="1" height="2" fill="#555"></rect><rect x="451" y="219" width="1" height="2" fill="#555"></rect><rect x="465" y="219" width="1" height="2" fill="#555"></rect><rect x="494" y="219" width="1" height="2" fill="#555"></rect><rect x="508" y="219" width="1" height="2" fill="#555"></rect><rect x="523" y="219" width="1" height="2" fill="#555"></rect><rect x="552" y="219" width="1" height="2" fill="#555"></rect><rect x="566" y="219" width="1" height="2" fill="#555"></rect><rect x="580" y="219" width="1" height="2" fill="#555"></rect><rect x="595" y="217" width="1" height="5" fill="#555"></rect><rect x="609" y="219" width="1" height="2" fill="#555"></rect><rect x="667" y="219" width="1" height="2" fill="#555"></rect><rect x="681" y="219" width="1" height="2" fill="#555"></rect><rect x="696" y="219" width="1" height="2" fill="#555"></rect><rect x="710" y="217" width="1" height="5" fill="#555"></rect><rect x="724" y="219" width="1" height="2" fill="#555"></rect><rect x="739" y="219" width="1" height="2" fill="#555"></rect><rect x="753" y="219" width="1" height="2" fill="#555"></rect><rect x="796" y="219" width="1" height="2" fill="#555"></rect><rect x="811" y="219" width="1" height="2" fill="#555"></rect><rect x="825" y="217" width="1" height="5" fill="#555"></rect><rect x="840" y="219" width="1" height="2" fill="#555"></rect><rect x="854" y="219" width="1" height="2" fill="#555"></rect><rect x="868" y="219" width="1" height="2" fill="#555"></rect><rect x="897" y="219" width="1" height="2" fill="#555"></rect><rect x="912" y="219" width="1" height="2" fill="#555"></rect><rect x="940" y="217" width="1" height="5" fill="#555"></rect><rect x="955" y="219" width="1" height="2" fill="#555"></rect><rect x="969" y="219" width="1" height="2" fill="#555"></rect><rect x="984" y="219" width="1" height="2" fill="#555"></rect><rect x="998" y="217" width="1" height="5" fill="#555"></rect><rect x="1012" y="219" width="1" height="2" fill="#555"></rect><rect x="1027" y="219" width="1" height="2" fill="#555"></rect><rect x="1041" y="219" width="1" height="2" fill="#555"></rect></svg>
<span class="t" style="left:304.7px;top:215.00px;font-size:10px;color:#444;font-weight:normal;">1</span>
<span class="t" style="left:419.9px;top:215.00px;font-size:10px;color:#444;font-weight:normal;">2</span>
<span class="t" style="left:535.1px;top:215.00px;font-size:10px;color:#444;font-weight:normal;">3</span>
<span class="t" style="left:650.3px;top:215.00px;font-size:10px;color:#444;font-weight:normal;">4</span>
<span class="t" style="left:765.5px;top:215.00px;font-size:10px;color:#444;font-weight:normal;">5</span>
<span class="t" style="left:880.7px;top:215.00px;font-size:10px;color:#444;font-weight:normal;">6</span>
<svg class="s" style="left:0;top:0" width="1108" height="240"><rect x="179" y="216" width="7" height="1" fill="#6e6e6e"></rect><rect x="179" y="218" width="7" height="1" fill="#6e6e6e"></rect><rect x="179" y="220" width="7" height="1" fill="#6e6e6e"></rect><rect x="179" y="222" width="7" height="1" fill="#6e6e6e"></rect><rect x="180" y="215" width="1" height="8" fill="#6e6e6e"></rect><rect x="182" y="215" width="1" height="8" fill="#6e6e6e"></rect><rect x="184" y="215" width="1" height="8" fill="#6e6e6e"></rect><rect x="328" y="216" width="7" height="1" fill="#6e6e6e"></rect><rect x="328" y="218" width="7" height="1" fill="#6e6e6e"></rect><rect x="328" y="220" width="7" height="1" fill="#6e6e6e"></rect><rect x="328" y="222" width="7" height="1" fill="#6e6e6e"></rect><rect x="329" y="215" width="1" height="8" fill="#6e6e6e"></rect><rect x="331" y="215" width="1" height="8" fill="#6e6e6e"></rect><rect x="333" y="215" width="1" height="8" fill="#6e6e6e"></rect><rect x="477" y="216" width="7" height="1" fill="#6e6e6e"></rect><rect x="477" y="218" width="7" height="1" fill="#6e6e6e"></rect><rect x="477" y="220" width="7" height="1" fill="#6e6e6e"></rect><rect x="477" y="222" width="7" height="1" fill="#6e6e6e"></rect><rect x="478" y="215" width="1" height="8" fill="#6e6e6e"></rect><rect x="480" y="215" width="1" height="8" fill="#6e6e6e"></rect><rect x="482" y="215" width="1" height="8" fill="#6e6e6e"></rect><rect x="626" y="216" width="7" height="1" fill="#6e6e6e"></rect><rect x="626" y="218" width="7" height="1" fill="#6e6e6e"></rect><rect x="626" y="220" width="7" height="1" fill="#6e6e6e"></rect><rect x="626" y="222" width="7" height="1" fill="#6e6e6e"></rect><rect x="627" y="215" width="1" height="8" fill="#6e6e6e"></rect><rect x="629" y="215" width="1" height="8" fill="#6e6e6e"></rect><rect x="631" y="215" width="1" height="8" fill="#6e6e6e"></rect><rect x="776" y="216" width="7" height="1" fill="#6e6e6e"></rect><rect x="776" y="218" width="7" height="1" fill="#6e6e6e"></rect><rect x="776" y="220" width="7" height="1" fill="#6e6e6e"></rect><rect x="776" y="222" width="7" height="1" fill="#6e6e6e"></rect><rect x="777" y="215" width="1" height="8" fill="#6e6e6e"></rect><rect x="779" y="215" width="1" height="8" fill="#6e6e6e"></rect><rect x="781" y="215" width="1" height="8" fill="#6e6e6e"></rect><rect x="925" y="216" width="7" height="1" fill="#6e6e6e"></rect><rect x="925" y="218" width="7" height="1" fill="#6e6e6e"></rect><rect x="925" y="220" width="7" height="1" fill="#6e6e6e"></rect><rect x="925" y="222" width="7" height="1" fill="#6e6e6e"></rect><rect x="926" y="215" width="1" height="8" fill="#6e6e6e"></rect><rect x="928" y="215" width="1" height="8" fill="#6e6e6e"></rect><rect x="930" y="215" width="1" height="8" fill="#6e6e6e"></rect></svg>
<svg class="s" style="left:185px;top:210px;" width="14" height="24" viewBox="0 0 14 24">
<path d="M1.5 1.5 H12.5 V5.8 L7 9 L1.5 5.8 Z" fill="#fff" stroke="#aaa" stroke-width="1"></path>
<path d="M7 9 L12.5 12.4 V16.2 H1.5 V12.4 Z" fill="#fff" stroke="#aaa" stroke-width="1"></path>
<rect x="1.5" y="16.2" width="11" height="6.2" fill="#fff" stroke="#aaa" stroke-width="1"></rect>
</svg>
<svg class="s" style="left:317px;top:218px;" width="14" height="10" viewBox="0 0 14 10"><path d="M1.5 8.5 V4.5 L6.5 1.2 L12.5 4.5 V8.5 Z" fill="#fff" stroke="#aaa" stroke-width="1"></path></svg>
<div class="r" style="left:5px;top:369px;width:13px;height:180px;background:#fff"></div>
<div class="r" style="left:5px;top:558px;width:13px;height:112px;background:#fff"></div>
<div class="r" style="left:5px;top:679px;width:13px;height:121px;background:#fff"></div>
<svg class="s" style="left:0;top:0" width="30" height="822"><rect x="11" y="253" width="4" height="1" fill="#555"></rect><rect x="12" y="267" width="2" height="1" fill="#555"></rect><rect x="12" y="282" width="2" height="1" fill="#555"></rect><rect x="12" y="296" width="2" height="1" fill="#555"></rect><rect x="11" y="311" width="4" height="1" fill="#555"></rect><rect x="12" y="325" width="2" height="1" fill="#555"></rect><rect x="12" y="339" width="2" height="1" fill="#555"></rect><rect x="12" y="354" width="2" height="1" fill="#555"></rect><rect x="12" y="383" width="2" height="1" fill="#555"></rect><rect x="12" y="397" width="2" height="1" fill="#555"></rect><rect x="12" y="411" width="2" height="1" fill="#555"></rect><rect x="11" y="426" width="4" height="1" fill="#555"></rect><rect x="12" y="440" width="2" height="1" fill="#555"></rect><rect x="12" y="455" width="2" height="1" fill="#555"></rect><rect x="12" y="469" width="2" height="1" fill="#555"></rect><rect x="12" y="498" width="2" height="1" fill="#555"></rect><rect x="12" y="512" width="2" height="1" fill="#555"></rect><rect x="12" y="527" width="2" height="1" fill="#555"></rect><rect x="11" y="541" width="4" height="1" fill="#555"></rect><rect x="12" y="570" width="2" height="1" fill="#555"></rect><rect x="12" y="584" width="2" height="1" fill="#555"></rect><rect x="12" y="613" width="2" height="1" fill="#555"></rect><rect x="12" y="627" width="2" height="1" fill="#555"></rect><rect x="12" y="642" width="2" height="1" fill="#555"></rect><rect x="11" y="656" width="4" height="1" fill="#555"></rect><rect x="12" y="685" width="2" height="1" fill="#555"></rect><rect x="12" y="699" width="2" height="1" fill="#555"></rect><rect x="12" y="728" width="2" height="1" fill="#555"></rect><rect x="12" y="743" width="2" height="1" fill="#555"></rect><rect x="12" y="757" width="2" height="1" fill="#555"></rect><rect x="11" y="771" width="4" height="1" fill="#555"></rect><rect x="12" y="786" width="2" height="1" fill="#555"></rect></svg>
<span class="t" style="left:8px;top:486.8px;font-size:10px;color:#444;transform:rotate(-90deg);transform-origin:0 0">1</span>
<span class="t" style="left:8px;top:602.0px;font-size:10px;color:#444;transform:rotate(-90deg);transform-origin:0 0">2</span>
<span class="t" style="left:8px;top:717.2px;font-size:10px;color:#444;transform:rotate(-90deg);transform-origin:0 0">3</span>
<div class="r" style="left:70px;top:253px;width:976px;height:560px;background:#fff;border:1px solid #c6c6c6;border-bottom:none"></div>
<div class="r" style="left:1089px;top:233px;width:18px;height:566px;background:#f3f3f3"></div>
<svg class="s" style="left:1092px;top:236px;" width="12" height="10" viewBox="0 0 12 10"><path d="M1.5 8.5 L6 2 L10.5 8.5 Z" fill="#707070" stroke="#707070" stroke-width="1" stroke-linejoin="round"></path></svg>
<div class="r" style="left:1094px;top:250px;width:9px;height:230px;background:#707070;border-radius:4.5px"></div>
<svg class="s" style="left:1092px;top:786px;" width="12" height="10" viewBox="0 0 12 10"><path d="M1.5 1.5 L6 8 L10.5 1.5 Z" fill="#707070" stroke="#707070" stroke-width="1" stroke-linejoin="round"></path></svg>
<div class="r" style="left:1px;top:799px;width:1106px;height:22px;background:#f3f3f3;border-top:1px solid #d6d6d6"></div>
<span class="t" style="left: 8.6px; top: 805.6px; font-size: 11.3px; color: rgb(51, 51, 51); font-weight: normal; transform: scaleX(0.962); transform-origin: 0px 0px;">Page 1 of 1</span>
<span class="t" style="left: 82.1px; top: 805.6px; font-size: 11.3px; color: rgb(51, 51, 51); font-weight: normal; transform: scaleX(0.9657); transform-origin: 0px 0px;">At: 2.6″</span>
<span class="t" style="left: 136.5px; top: 805.6px; font-size: 11.3px; color: rgb(51, 51, 51); font-weight: normal; transform: scaleX(1.0252); transform-origin: 0px 0px;">45 words</span>
<svg class="s" style="left:201px;top:802px;" width="18" height="16" viewBox="0 0 18 16"><path d="M2.5 2.5 Q5.5 1.5 8.5 3.2 Q11.5 1.5 14.5 2.5 V9.5 M2.5 2.5 V13.8 Q5.5 12.8 8.5 14.3 M8.5 3.2 V14.3" fill="none" stroke="#333" stroke-width="1.1"></path>
<path d="M10 12 L12 14 L16 9.5" fill="none" stroke="#333" stroke-width="1.1"></path></svg>
<svg class="s" style="left:236px;top:802px;" width="18" height="16" viewBox="0 0 18 16"><path d="M2.3 14.3 V2.3 H15.7 V8" fill="none" stroke="#333" stroke-width="1.1"></path><path d="M2.3 4.8 H15.7 M4.5 7.5 H8.5 M4.5 10 H7.5 M4.5 12.5 H7.5" stroke="#333" stroke-width="1"></path>
<circle cx="12" cy="11.5" r="3.6" fill="#f3f3f3" stroke="#333" stroke-width="1.1"></circle><circle cx="12" cy="11.5" r="1.7" fill="#333"></circle></svg>
<svg class="s" style="left:268px;top:801px;" width="18" height="18" viewBox="0 0 18 18"><circle cx="9" cy="3" r="1.6" fill="none" stroke="#333" stroke-width="1"></circle>
<path d="M2.5 5 Q9 7.5 15.5 5 M9 7 V10.5 L5.5 16 M9 10.5 L10 12" fill="none" stroke="#333" stroke-width="1.1"></path>
<path d="M11 12 L16 17 M16 12 L11 17" stroke="#333" stroke-width="1.1"></path></svg>
<span class="t" style="left: 288px; top: 805.39px; font-size: 11.3px; color: rgb(51, 51, 51); font-weight: normal; transform: scaleX(1.0005); transform-origin: 0px 0px;">Accessibility: Investigate</span>
<svg class="s" style="left:735px;top:802px;" width="18" height="16" viewBox="0 0 18 16"><path d="M1.5 4.5 V1.5 H4.5 M13.5 1.5 H16.5 V4.5 M16.5 11.5 V14.5 H13.5 M4.5 14.5 H1.5 V11.5" fill="none" stroke="#333" stroke-width="1"></path>
<path d="M5 3.5 H10 L13 6.5 V12.8 H5 Z M10 3.5 V6.5 H13" fill="none" stroke="#333" stroke-width="1.1" stroke-linejoin="round"></path></svg>
<span class="t" style="left: 754px; top: 805.89px; font-size: 11.3px; color: rgb(51, 51, 51); font-weight: normal; transform: scaleX(0.9654); transform-origin: 0px 0px;">Focus</span>
<svg class="s" style="left:806px;top:802px;" width="18" height="16" viewBox="0 0 18 16"><path d="M2.5 2.5 H7 Q8.5 2.5 9 3.5 Q9.5 2.5 11 2.5 H15.5 V13 H10.5 Q9.5 13 9 14 Q8.5 13 7.5 13 H2.5 Z M9 3.5 V14" fill="none" stroke="#333" stroke-width="1.1"></path>
<path d="M4 5.5 H7 M4 8 H7 M4 10.5 H7 M11 5.5 H14 M11 8 H14 M11 10.5 H14" stroke="#333" stroke-width="0.9"></path></svg>
<div class="r" style="left:836px;top:800px;width:40px;height:21px;background:#e1e1e1"></div>
<svg class="s" style="left:846px;top:802px;" width="18" height="16" viewBox="0 0 18 16"><rect x="3.5" y="1.5" width="11" height="13.5" fill="none" stroke="#333" stroke-width="1.1"></rect>
<path d="M5.5 4.5 H12.5 M5.5 6.7 H12.5 M5.5 8.9 H12.5 M5.5 11.1 H12.5" stroke="#333" stroke-width="1"></path></svg>
<svg class="s" style="left:887px;top:802px;" width="18" height="16" viewBox="0 0 18 16"><path d="M7.5 14.5 H2.5 V1.5 H15.5 V7" fill="none" stroke="#333" stroke-width="1.1"></path>
<path d="M2.5 4 H15.5 M4.5 6.5 H9 M4.5 9 H7.5 M4.5 11.5 H7" stroke="#333" stroke-width="1"></path>
<circle cx="12.3" cy="12" r="3.7" fill="#f3f3f3" stroke="#333" stroke-width="1"></circle><path d="M8.6 12 H16 M12.3 8.3 V15.7 M12.3 8.3 Q10.5 12 12.3 15.7 M12.3 8.3 Q14.1 12 12.3 15.7" fill="none" stroke="#333" stroke-width="0.8"></path></svg>
<div class="r" style="left:922px;top:810px;width:7px;height:1px;background:#444"></div>
<div class="r" style="left:935px;top:810px;width:100px;height:1px;background:#666"></div>
<div class="r" style="left:985px;top:806px;width:5px;height:10px;background:#555"></div>
<div class="r" style="left:1039px;top:810px;width:8px;height:1px;background:#444"></div>
<div class="r" style="left:1042.5px;top:806.5px;width:1px;height:8px;background:#444"></div>
<span class="t" style="left: 1061px; top: 805.89px; font-size: 11.3px; color: rgb(51, 51, 51); font-weight: normal; transform: scaleX(0.9202); transform-origin: 0px 0px;">120%</span>
<div class="r" style="left:184px;top:368px;width:746px;height:141px;background:#37d985"></div>
<svg class="s" style="left:225px;top:380px;" width="105" height="115" viewBox="0 0 105 115">
<defs><clipPath id="bc"><path d="M46.8 21 L56.6 10.8 Q58.2 9.6 59 11.3 L61.4 22.5 Q67.5 25.5 72.7 30.7 L83 32.6 Q85 33.2 84.2 35 L77.1 46.4 L73.4 47.8 L54 64 L53 96.6 L90 94.2 Q94.6 93.8 94.4 96 Q93.5 99.5 89.5 101.5 Q72 106 53 106.4 Q30 105.5 18 96.5 Q9.5 90 8.5 77 Q7.5 66 13.5 56 Q21 44 35.1 41.7 Q36 41.6 37.3 41.1 Q35.2 36.5 37 30.5 Q39.5 24 46.8 21 Z"></path></clipPath></defs>
<path d="M46.8 21 L56.6 10.8 Q58.2 9.6 59 11.3 L61.4 22.5 Q67.5 25.5 72.7 30.7 L83 32.6 Q85 33.2 84.2 35 L77.1 46.4 L73.4 47.8 L54 64 L53 96.6 L90 94.2 Q94.6 93.8 94.4 96 Q93.5 99.5 89.5 101.5 Q72 106 53 106.4 Q30 105.5 18 96.5 Q9.5 90 8.5 77 Q7.5 66 13.5 56 Q21 44 35.1 41.7 Q36 41.6 37.3 41.1 Q35.2 36.5 37 30.5 Q39.5 24 46.8 21 Z" fill="#fffdfc"></path>
<g clip-path="url(#bc)">
<path d="M0 70 Q12 74 24.9 85.7 Q34 90.5 43.9 91.5 Q49 92.5 53 95 L60 110 L0 110 Z" fill="#f6ddcf"></path>
<path d="M59.5 28 Q57.5 42 64 50.5 L80 47 L76 30 Q68 25.5 61 24 Z" fill="#f8c25a"></path>
<path d="M22.3 73.2 Q14 66 14.5 59 Q15 53 20.5 52.6 Q24 52.5 25.5 55.5 Q27.5 50.5 32 51.2 Q37 52.5 35.5 59.5 Q33 67 22.3 73.2 Z" fill="#f8c25a"></path>
<path d="M46 97 L92 93.5 L96 100 L80 106 L46 108 Z" fill="#f9c55a"></path>
<path d="M60.6 96 h3 v12 h-3 Z M71 95.3 h3 v12 h-3 Z M80.1 94.6 h3 v10 h-3 Z" fill="#efa514"></path>
</g>
<path d="M46.8 21 L56.6 10.8 Q58.2 9.6 59 11.3 L61.4 22.5 Q67.5 25.5 72.7 30.7 L83 32.6 Q85 33.2 84.2 35 L77.1 46.4 L73.4 47.8 L54 64 L53 96.6 L90 94.2 Q94.6 93.8 94.4 96 Q93.5 99.5 89.5 101.5 Q72 106 53 106.4 Q30 105.5 18 96.5 Q9.5 90 8.5 77 Q7.5 66 13.5 56 Q21 44 35.1 41.7 Q36 41.6 37.3 41.1 Q35.2 36.5 37 30.5 Q39.5 24 46.8 21 Z" fill="none" stroke="#4a2616" stroke-width="2.1" stroke-linejoin="round"></path>
<path d="M49.7 21.8 L55.6 13 L57 21.8 Z" fill="#f6aab5"></path>
<path d="M74.9 36.9 L82.6 34.7 L77.1 44.2 Z" fill="#f6aab5"></path>
<path d="M48.6 33.3 Q52 34.5 53.5 38.3" fill="none" stroke="#4a2616" stroke-width="1.3" stroke-linecap="round"></path>
<path d="M60.3 45.9 Q63.5 43.2 66.9 45.9" fill="none" stroke="#4a2616" stroke-width="1.3" stroke-linecap="round"></path>
<ellipse cx="45.7" cy="39.3" rx="2.2" ry="1.6" fill="#f9b9c4"></ellipse>
<circle cx="55.4" cy="43.2" r="1" fill="#4a2616"></circle>
<path d="M51.3 44.6 Q53.8 47.6 57 47" fill="none" stroke="#4a2616" stroke-width="1.1" stroke-linecap="round"></path>
<path d="M54 64.5 L73.4 50.5 L91.3 64.5 V93.4 L54 96 Z" fill="#fdf8f3" stroke="#4a2616" stroke-width="2" stroke-linejoin="round"></path>
<path d="M56 65.5 L73.4 53 L89.5 65.5 V68 L73.4 56 L56 68 Z" fill="#f7dccb"></path>
<path d="M48.6 63.6 L73.4 47.6 L96.9 64.5 Q97.5 67.5 95.5 68 L73.4 52.3 L50.2 67.2 Q48 66.5 48.6 63.6 Z" fill="#e98070" stroke="#4a2616" stroke-width="1.7" stroke-linejoin="round"></path>
<circle cx="73.1" cy="66.1" r="2.8" fill="#4a2616"></circle>
<path d="M64 94 V81 Q64 73.2 73.4 73.2 Q82.8 73.2 82.8 81 V93.4 Z" fill="#c8a98b" stroke="#4a2616" stroke-width="1.8"></path>
<circle cx="78" cy="86.3" r="1" fill="#4a2616"></circle>
<path d="M46 96.2 L92 93.2" stroke="#4a2616" stroke-width="1.9" stroke-linecap="round"></path>
<path d="M40.2 68.6 Q46.5 67.3 51.8 72" fill="none" stroke="#4a2616" stroke-width="1.9" stroke-linecap="round"></path>
<path d="M58.5 78.5 h3 M84 74 h3 M85 77.5 h3" stroke="#e6dcd3" stroke-width="1"></path>
</svg>
<span class="t" style="left: 371.2px; top: 423.04px; font-size: 37.6px; color: rgb(0, 0, 0); font-weight: normal; transform: scaleX(0.9855); transform-origin: 0px 0px;">Real Estate Sales Report</span>
<div class="r" style="left:193px;top:552px;width:140px;height:80.6px;background:#c9c9c9"></div>
<div class="r" style="left:334.4px;top:552px;width:147.6px;height:80.6px;background:#c9c9c9"></div>
<div class="r" style="left:484px;top:552px;width:147px;height:80.6px;background:#c9c9c9"></div>
<div class="r" style="left:633.4px;top:552px;width:148px;height:102.6px;background:#c9c9c9"></div>
<div class="r" style="left:782.6px;top:552px;width:147.8px;height:122.6px;background:#c9c9c9"></div>
<div class="r" style="left:183.5px;top:529.5px;width:747.2px;height:21.6px;background:#7f7f7f"></div>
<div class="r" style="left:183px;top:529px;width:748px;height:1px;background:#111"></div>
<div class="r" style="left:183px;top:551px;width:748px;height:1px;background:#111"></div>
<div class="r" style="left:183px;top:675px;width:748px;height:1px;background:#111"></div>
<div class="r" style="left:183px;top:529px;width:1px;height:147px;background:#111"></div>
<div class="r" style="left:333px;top:529px;width:1px;height:147px;background:#111"></div>
<div class="r" style="left:482px;top:529px;width:1px;height:147px;background:#111"></div>
<div class="r" style="left:631px;top:529px;width:1px;height:147px;background:#111"></div>
<div class="r" style="left:781px;top:529px;width:1px;height:147px;background:#111"></div>
<div class="r" style="left:930px;top:529px;width:1px;height:147px;background:#111"></div>
<span class="t" style="left: 193.1px; top: 534.88px; font-size: 14.5px; color: rgb(255, 255, 255); font-weight: normal; transform: scaleX(1.053); transform-origin: 0px 0px;">Sale·Date</span>
<span class="t" style="left: 342.6px; top: 534.88px; font-size: 14.5px; color: rgb(255, 255, 255); font-weight: normal; transform: scaleX(1.0807); transform-origin: 0px 0px;">City</span>
<span class="t" style="left: 492.7px; top: 534.88px; font-size: 14.5px; color: rgb(255, 255, 255); font-weight: normal; transform: scaleX(1.0734); transform-origin: 0px 0px;">Units·Sold</span>
<span class="t" style="left: 641.6px; top: 534.88px; font-size: 14.5px; color: rgb(255, 255, 255); font-weight: normal; transform: scaleX(1.0567); transform-origin: 0px 0px;">Total·Sales</span>
<span class="t" style="left: 790px; top: 534.88px; font-size: 14.5px; color: rgb(255, 255, 255); font-weight: normal; transform: scaleX(1.0359); transform-origin: 0px 0px;">Avg·Sell·Price</span>
<svg class="s" style="left:194.1px;top:560.1px;" width="73.9" height="20.5" viewBox="0 0 73.9 20.5"><path d="M3.6 0.5 H73.4 Q69.3 10.2 73.4 20.0 H3.6 Q0.5 11.2 0.5 10.2 Q0.5 9.2 3.6 0.5 Z" fill="#d3d7dc" stroke="#8aa0b6" stroke-width="1"></path><path d="M4 10.2 L7 8.0 V12.6 Z" fill="#a5b4c6"></path><rect x="8.2" y="7.8" width="1.6" height="5" fill="#b4c0ce"></rect></svg>
<span class="t" style="left: 207px; top: 564.37px; font-size: 11.8px; color: rgb(0, 0, 0); font-weight: normal; transform: scaleX(1.0461); transform-origin: 0px 0px;">Sale Date</span>
<span class="t" style="left: 268.6px; top: 564.77px; font-size: 14.5px; color: rgb(111, 111, 111); font-weight: normal; transform: scaleX(1.0228); transform-origin: 0px 0px;">Click·or·</span>
<span class="t" style="left: 193.4px; top: 586.88px; font-size: 14.5px; color: rgb(111, 111, 111); font-weight: normal; transform: scaleX(1.1052); transform-origin: 0px 0px;">tap·here·to·enter·</span>
<span class="t" style="left: 193.4px; top: 615.27px; font-size: 14.5px; color: rgb(111, 111, 111); font-weight: normal; transform: scaleX(1.1348); transform-origin: 0px 0px;">text.</span>
<svg class="s" style="left:227px;top:611.2px;" width="73.8" height="20.4" viewBox="0 0 73.8 20.4"><path d="M0.5 0.5 H70.2 Q73.3 9.2 73.3 10.2 Q73.3 11.2 70.2 19.9 H0.5 Q4.6 10.2 0.5 0.5 Z" fill="#d3d7dc" stroke="#8aa0b6" stroke-width="1"></path><path d="M62.6 7.2 L67.0 10.2 L62.6 13.2 Z" fill="#a3b6ca"></path></svg>
<span class="t" style="left: 234px; top: 614.87px; font-size: 11.8px; color: rgb(0, 0, 0); font-weight: normal; transform: scaleX(1.0519); transform-origin: 0px 0px;">Sale Date</span>
<svg class="s" style="left:343.2px;top:560.1px;" width="40.6" height="20.5" viewBox="0 0 40.6 20.5"><path d="M3.6 0.5 H40.1 Q36.0 10.2 40.1 20.0 H3.6 Q0.5 11.2 0.5 10.2 Q0.5 9.2 3.6 0.5 Z" fill="#d3d7dc" stroke="#8aa0b6" stroke-width="1"></path><path d="M4 10.2 L7 8.0 V12.6 Z" fill="#a5b4c6"></path><rect x="8.2" y="7.8" width="1.6" height="5" fill="#b4c0ce"></rect></svg>
<span class="t" style="left: 356.7px; top: 564.37px; font-size: 11.8px; color: rgb(0, 0, 0); font-weight: normal; transform: scaleX(0.9986); transform-origin: 0px 0px;">City</span>
<span class="t" style="left: 385.8px; top: 564.77px; font-size: 14.5px; color: rgb(111, 111, 111); font-weight: normal; transform: scaleX(1.0462); transform-origin: 0px 0px;">Click·or·tap·</span>
<span class="t" style="left: 342.5px; top: 586.88px; font-size: 14.5px; color: rgb(111, 111, 111); font-weight: normal; transform: scaleX(1.1065); transform-origin: 0px 0px;">here·to·enter·</span>
<span class="t" style="left: 342.5px; top: 615.27px; font-size: 14.5px; color: rgb(111, 111, 111); font-weight: normal; transform: scaleX(1.1348); transform-origin: 0px 0px;">text.</span>
<svg class="s" style="left:376px;top:611.2px;" width="40.9" height="20.4" viewBox="0 0 40.9 20.4"><path d="M0.5 0.5 H37.3 Q40.4 9.2 40.4 10.2 Q40.4 11.2 37.3 19.9 H0.5 Q4.6 10.2 0.5 0.5 Z" fill="#d3d7dc" stroke="#8aa0b6" stroke-width="1"></path><path d="M29.7 7.2 L34.1 10.2 L29.7 13.2 Z" fill="#a3b6ca"></path></svg>
<span class="t" style="left: 383.4px; top: 614.87px; font-size: 11.8px; color: rgb(0, 0, 0); font-weight: normal; transform: scaleX(1.0134); transform-origin: 0px 0px;">City</span>
<svg class="s" style="left:493.1px;top:560.1px;" width="75.5" height="20.5" viewBox="0 0 75.5 20.5"><path d="M3.6 0.5 H75.0 Q70.9 10.2 75.0 20.0 H3.6 Q0.5 11.2 0.5 10.2 Q0.5 9.2 3.6 0.5 Z" fill="#d3d7dc" stroke="#8aa0b6" stroke-width="1"></path><path d="M4 10.2 L7 8.0 V12.6 Z" fill="#a5b4c6"></path><rect x="8.2" y="7.8" width="1.6" height="5" fill="#b4c0ce"></rect></svg>
<span class="t" style="left: 506.4px; top: 564.37px; font-size: 11.8px; color: rgb(0, 0, 0); font-weight: normal; transform: scaleX(1.0524); transform-origin: 0px 0px;">Units Sold</span>
<span class="t" style="left: 570.7px; top: 564.77px; font-size: 14.5px; color: rgb(111, 111, 111); font-weight: normal; transform: scaleX(1.0284); transform-origin: 0px 0px;">Click·or·</span>
<span class="t" style="left: 492.2px; top: 586.88px; font-size: 14.5px; color: rgb(111, 111, 111); font-weight: normal; transform: scaleX(1.107); transform-origin: 0px 0px;">tap·here·to·enter·</span>
<span class="t" style="left: 492.2px; top: 615.27px; font-size: 14.5px; color: rgb(111, 111, 111); font-weight: normal; transform: scaleX(1.1348); transform-origin: 0px 0px;">text.</span>
<svg class="s" style="left:526px;top:611.2px;" width="75.8" height="20.4" viewBox="0 0 75.8 20.4"><path d="M0.5 0.5 H72.2 Q75.3 9.2 75.3 10.2 Q75.3 11.2 72.2 19.9 H0.5 Q4.6 10.2 0.5 0.5 Z" fill="#d3d7dc" stroke="#8aa0b6" stroke-width="1"></path><path d="M64.6 7.2 L69.0 10.2 L64.6 13.2 Z" fill="#a3b6ca"></path></svg>
<span class="t" style="left: 533.4px; top: 614.87px; font-size: 11.8px; color: rgb(0, 0, 0); font-weight: normal; transform: scaleX(1.045); transform-origin: 0px 0px;">Units Sold</span>
<svg class="s" style="left:642.1px;top:560.1px;" width="80.9" height="20.5" viewBox="0 0 80.9 20.5"><path d="M3.6 0.5 H80.4 Q76.3 10.2 80.4 20.0 H3.6 Q0.5 11.2 0.5 10.2 Q0.5 9.2 3.6 0.5 Z" fill="#d3d7dc" stroke="#8aa0b6" stroke-width="1"></path><path d="M4 10.2 L7 8.0 V12.6 Z" fill="#a5b4c6"></path><rect x="8.2" y="7.8" width="1.6" height="5" fill="#b4c0ce"></rect></svg>
<span class="t" style="left: 656.5px; top: 564.37px; font-size: 11.8px; color: rgb(0, 0, 0); font-weight: normal; transform: scaleX(1.0361); transform-origin: 0px 0px;">Total Sales</span>
<span class="t" style="left: 724.4px; top: 564.77px; font-size: 14.5px; color: rgb(111, 111, 111); font-weight: normal; transform: scaleX(0.9903); transform-origin: 0px 0px;">Click·</span>
<span class="t" style="left: 641.6px; top: 586.88px; font-size: 14.5px; color: rgb(111, 111, 111); font-weight: normal; transform: scaleX(1.089); transform-origin: 0px 0px;">or·tap·here·to·</span>
<span class="t" style="left: 641.6px; top: 607.17px; font-size: 14.5px; color: rgb(111, 111, 111); font-weight: normal; transform: scaleX(1.0953); transform-origin: 0px 0px;">enter·</span>
<span class="t" style="left: 641.6px; top: 636.97px; font-size: 14.5px; color: rgb(111, 111, 111); font-weight: normal; transform: scaleX(1.1202); transform-origin: 0px 0px;">text.</span>
<svg class="s" style="left:675px;top:633.2px;" width="80.5" height="20.4" viewBox="0 0 80.5 20.4"><path d="M0.5 0.5 H76.9 Q80.0 9.2 80.0 10.2 Q80.0 11.2 76.9 19.9 H0.5 Q4.6 10.2 0.5 0.5 Z" fill="#d3d7dc" stroke="#8aa0b6" stroke-width="1"></path><path d="M69.3 7.2 L73.7 10.2 L69.3 13.2 Z" fill="#a3b6ca"></path></svg>
<span class="t" style="left: 683.1px; top: 636.87px; font-size: 11.8px; color: rgb(0, 0, 0); font-weight: normal; transform: scaleX(1.0447); transform-origin: 0px 0px;">Total Sales</span>
<svg class="s" style="left:791.1px;top:560.1px;" width="138.1" height="20.5" viewBox="0 0 138.1 20.5"><path d="M3.6 0.5 H137.6 Q133.5 10.2 137.6 20.0 H3.6 Q0.5 11.2 0.5 10.2 Q0.5 9.2 3.6 0.5 Z" fill="#d3d7dc" stroke="#8aa0b6" stroke-width="1"></path><path d="M4 10.2 L7 8.0 V12.6 Z" fill="#a5b4c6"></path><rect x="8.2" y="7.8" width="1.6" height="5" fill="#b4c0ce"></rect></svg>
<span class="t" style="left: 804px; top: 564.07px; font-size: 11.8px; color: rgb(0, 0, 0); font-weight: normal; transform: scaleX(1.0517); transform-origin: 0px 0px;">Average Selling Price</span>
<span class="t" style="left: 790.7px; top: 586.57px; font-size: 14.5px; color: rgb(111, 111, 111); font-weight: normal; transform: scaleX(1.0575); transform-origin: 0px 0px;">Click·or·tap·here·</span>
<span class="t" style="left: 790.7px; top: 607.97px; font-size: 14.5px; color: rgb(111, 111, 111); font-weight: normal; transform: scaleX(1.1019); transform-origin: 0px 0px;">to·enter·</span>
<span class="t" style="left: 790.7px; top: 629.77px; font-size: 14.5px; color: rgb(111, 111, 111); font-weight: normal; transform: scaleX(1.1348); transform-origin: 0px 0px;">text.</span>
<svg class="s" style="left:790.7px;top:654px;" width="138.3" height="20.6" viewBox="0 0 138.3 20.6"><path d="M0.5 0.5 H134.7 Q137.8 9.3 137.8 10.3 Q137.8 11.3 134.7 20.1 H0.5 Q4.6 10.3 0.5 0.5 Z" fill="#d3d7dc" stroke="#8aa0b6" stroke-width="1"></path><path d="M127.1 7.3 L131.5 10.3 L127.1 13.3 Z" fill="#a3b6ca"></path></svg>
<span class="t" style="left: 798.1px; top: 658.07px; font-size: 11.8px; color: rgb(0, 0, 0); font-weight: normal; transform: scaleX(1.0517); transform-origin: 0px 0px;">Average Selling Price</span>
<div class="r" style="left:931px;top:677.4px;width:14.5px;height:14.5px;border:1px solid #8c8c8c;background:#fff"></div>
<div class="r" style="left:168px;top:514px;width:14.5px;height:14.5px;border:1px solid #9a9a9a;background:#fff"></div>
<svg class="s" style="left:168px;top:514px;" width="15" height="15" viewBox="0 0 15 15"><path d="M7.25 2.5 V12 M2.5 7.25 H12" stroke="#333" stroke-width="1"></path><path d="M7.25 2 L5.8 3.8 H8.7 Z M7.25 12.5 L5.8 10.7 H8.7 Z M2 7.25 L3.8 5.8 V8.7 Z M12.5 7.25 L10.7 5.8 V8.7 Z" fill="#333"></path></svg>
<svg class="s" style="left:260.4px;top:537.1px;" width="8.2" height="8.6" viewBox="0 0 8.2 8.6"><path d="M1.8 1.5 H6.4 Q7.9 4.3 6.4 7.1 H1.8 Q0.3 4.3 1.8 1.5 Z" fill="none" stroke="#fff" stroke-width="1.15"></path><path d="M0.7 0.6 L1.9 1.7 M7.5 0.6 L6.3 1.7 M0.7 8 L1.9 6.9 M7.5 8 L6.3 6.9" stroke="#fff" stroke-width="1.3" stroke-linecap="round"></path></svg>
<svg class="s" style="left:370px;top:537.1px;" width="8.2" height="8.6" viewBox="0 0 8.2 8.6"><path d="M1.8 1.5 H6.4 Q7.9 4.3 6.4 7.1 H1.8 Q0.3 4.3 1.8 1.5 Z" fill="none" stroke="#fff" stroke-width="1.15"></path><path d="M0.7 0.6 L1.9 1.7 M7.5 0.6 L6.3 1.7 M0.7 8 L1.9 6.9 M7.5 8 L6.3 6.9" stroke="#fff" stroke-width="1.3" stroke-linecap="round"></path></svg>
<svg class="s" style="left:565px;top:537.1px;" width="8.2" height="8.6" viewBox="0 0 8.2 8.6"><path d="M1.8 1.5 H6.4 Q7.9 4.3 6.4 7.1 H1.8 Q0.3 4.3 1.8 1.5 Z" fill="none" stroke="#fff" stroke-width="1.15"></path><path d="M0.7 0.6 L1.9 1.7 M7.5 0.6 L6.3 1.7 M0.7 8 L1.9 6.9 M7.5 8 L6.3 6.9" stroke="#fff" stroke-width="1.3" stroke-linecap="round"></path></svg>
<svg class="s" style="left:718px;top:537.1px;" width="8.2" height="8.6" viewBox="0 0 8.2 8.6"><path d="M1.8 1.5 H6.4 Q7.9 4.3 6.4 7.1 H1.8 Q0.3 4.3 1.8 1.5 Z" fill="none" stroke="#fff" stroke-width="1.15"></path><path d="M0.7 0.6 L1.9 1.7 M7.5 0.6 L6.3 1.7 M0.7 8 L1.9 6.9 M7.5 8 L6.3 6.9" stroke="#fff" stroke-width="1.3" stroke-linecap="round"></path></svg>
<svg class="s" style="left:886px;top:537.1px;" width="8.2" height="8.6" viewBox="0 0 8.2 8.6"><path d="M1.8 1.5 H6.4 Q7.9 4.3 6.4 7.1 H1.8 Q0.3 4.3 1.8 1.5 Z" fill="none" stroke="#fff" stroke-width="1.15"></path><path d="M0.7 0.6 L1.9 1.7 M7.5 0.6 L6.3 1.7 M0.7 8 L1.9 6.9 M7.5 8 L6.3 6.9" stroke="#fff" stroke-width="1.3" stroke-linecap="round"></path></svg>
<svg class="s" style="left:301.8px;top:618.1px;" width="8.2" height="8.6" viewBox="0 0 8.2 8.6"><path d="M1.8 1.5 H6.4 Q7.9 4.3 6.4 7.1 H1.8 Q0.3 4.3 1.8 1.5 Z" fill="none" stroke="#000" stroke-width="1.15"></path><path d="M0.7 0.6 L1.9 1.7 M7.5 0.6 L6.3 1.7 M0.7 8 L1.9 6.9 M7.5 8 L6.3 6.9" stroke="#000" stroke-width="1.3" stroke-linecap="round"></path></svg>
<svg class="s" style="left:419px;top:618.1px;" width="8.2" height="8.6" viewBox="0 0 8.2 8.6"><path d="M1.8 1.5 H6.4 Q7.9 4.3 6.4 7.1 H1.8 Q0.3 4.3 1.8 1.5 Z" fill="none" stroke="#000" stroke-width="1.15"></path><path d="M0.7 0.6 L1.9 1.7 M7.5 0.6 L6.3 1.7 M0.7 8 L1.9 6.9 M7.5 8 L6.3 6.9" stroke="#000" stroke-width="1.3" stroke-linecap="round"></path></svg>
<svg class="s" style="left:603.8px;top:618.1px;" width="8.2" height="8.6" viewBox="0 0 8.2 8.6"><path d="M1.8 1.5 H6.4 Q7.9 4.3 6.4 7.1 H1.8 Q0.3 4.3 1.8 1.5 Z" fill="none" stroke="#000" stroke-width="1.15"></path><path d="M0.7 0.6 L1.9 1.7 M7.5 0.6 L6.3 1.7 M0.7 8 L1.9 6.9 M7.5 8 L6.3 6.9" stroke="#000" stroke-width="1.3" stroke-linecap="round"></path></svg>
<svg class="s" style="left:757.6px;top:639.8px;" width="8.2" height="8.6" viewBox="0 0 8.2 8.6"><path d="M1.8 1.5 H6.4 Q7.9 4.3 6.4 7.1 H1.8 Q0.3 4.3 1.8 1.5 Z" fill="none" stroke="#000" stroke-width="1.15"></path><path d="M0.7 0.6 L1.9 1.7 M7.5 0.6 L6.3 1.7 M0.7 8 L1.9 6.9 M7.5 8 L6.3 6.9" stroke="#000" stroke-width="1.3" stroke-linecap="round"></path></svg>
<svg class="s" style="left:932.9px;top:537.1px;" width="8.2" height="8.6" viewBox="0 0 8.2 8.6"><path d="M1.8 1.5 H6.4 Q7.9 4.3 6.4 7.1 H1.8 Q0.3 4.3 1.8 1.5 Z" fill="none" stroke="#000" stroke-width="1.15"></path><path d="M0.7 0.6 L1.9 1.7 M7.5 0.6 L6.3 1.7 M0.7 8 L1.9 6.9 M7.5 8 L6.3 6.9" stroke="#000" stroke-width="1.3" stroke-linecap="round"></path></svg>
<svg class="s" style="left:932.9px;top:559.1px;" width="8.2" height="8.6" viewBox="0 0 8.2 8.6"><path d="M1.8 1.5 H6.4 Q7.9 4.3 6.4 7.1 H1.8 Q0.3 4.3 1.8 1.5 Z" fill="none" stroke="#000" stroke-width="1.15"></path><path d="M0.7 0.6 L1.9 1.7 M7.5 0.6 L6.3 1.7 M0.7 8 L1.9 6.9 M7.5 8 L6.3 6.9" stroke="#000" stroke-width="1.3" stroke-linecap="round"></path></svg>
<svg class="s" style="left:932px;top:499px;" width="8.2" height="13" viewBox="0 0 8.2 13"><path d="M4.6 0.9 H3.6 Q0.2 1.2 0.2 4 Q0.2 6.8 3.6 7 H4.6 Z" fill="#000"></path><path d="M4.3 1.2 V12.7 M7.2 0.7 V12.7 M3.8 1.1 H7.7" stroke="#000" stroke-width="1.35"></path></svg>
<svg class="s" style="left:185px;top:682px;" width="8.2" height="13" viewBox="0 0 8.2 13"><path d="M4.6 0.9 H3.6 Q0.2 1.2 0.2 4 Q0.2 6.8 3.6 7 H4.6 Z" fill="#000"></path><path d="M4.3 1.2 V12.7 M7.2 0.7 V12.7 M3.8 1.1 H7.7" stroke="#000" stroke-width="1.35"></path></svg>
</body></html>
